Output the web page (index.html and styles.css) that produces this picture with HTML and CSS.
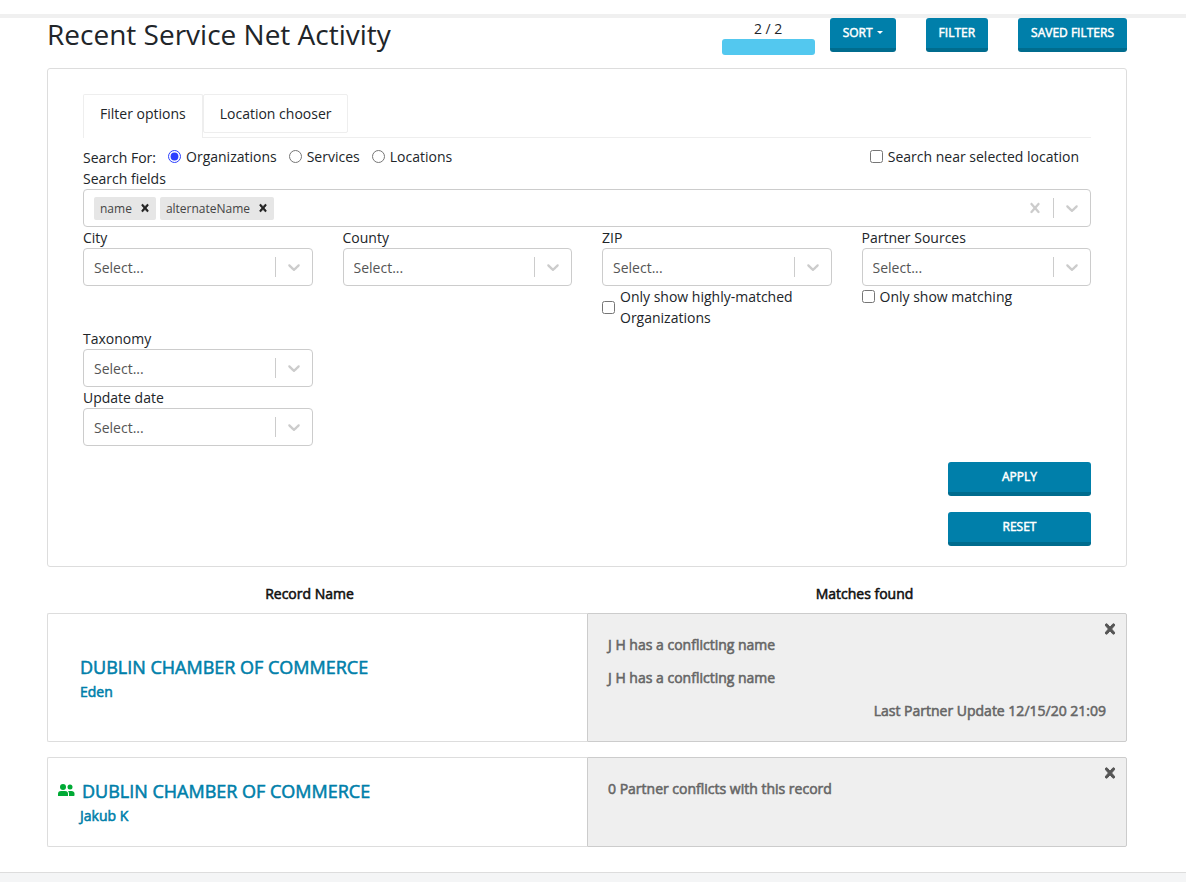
FILE: index.html
```
<!DOCTYPE html>
<html lang="en">
<head>
    <meta charset="UTF-8">
    <meta name="viewport" content="width=device-width, initial-scale=1.0">
    <title>Recent Service Net Activity</title>
    <link rel="stylesheet" href="styles.css">
</head>
<body>
    <svg class="sprite" aria-hidden="true">
        <symbol id="chevron" viewBox="0 0 20 20">
            <path d="M4.516 7.548c0.436-0.446 1.043-0.481 1.576 0l3.908 3.747 3.908-3.747c0.533-0.481 1.141-0.446 1.574 0 0.436 0.445 0.408 1.197 0 1.615-0.406 0.418-4.695 4.502-4.695 4.502-0.217 0.223-0.502 0.335-0.787 0.335s-0.57-0.112-0.789-0.335c0 0-4.287-4.084-4.695-4.502s-0.436-1.17 0-1.615z"/>
        </symbol>
        <symbol id="cross" viewBox="0 0 20 20">
            <path d="M14.348 14.849c-0.469 0.469-1.229 0.469-1.697 0l-2.651-3.030-2.651 3.029c-0.469 0.469-1.229 0.469-1.697 0-0.469-0.469-0.469-1.229 0-1.697l2.758-3.15-2.759-3.152c-0.469-0.469-0.469-1.228 0-1.697s1.228-0.469 1.697 0l2.652 3.031 2.651-3.031c0.469-0.469 1.228-0.469 1.697 0s0.469 1.229 0 1.697l-2.758 3.152 2.758 3.15c0.469 0.469 0.469 1.229 0 1.698z"/>
        </symbol>
    </svg>

    <div class="top-bar"></div>

    <main class="container">
        <header class="page-header">
            <h1>Recent Service Net Activity</h1>
            <div class="counter">
                <span>2 / 2</span>
                <div class="counter-bar"></div>
            </div>
            <div class="actions">
                <button type="button" class="btn">SORT<span class="caret"></span></button>
                <button type="button" class="btn">FILTER</button>
                <button type="button" class="btn">SAVED FILTERS</button>
            </div>
        </header>

        <section class="filter-card">
            <div class="tabs" role="tablist">
                <button type="button" class="tab active" role="tab" aria-selected="true">Filter options</button>
                <button type="button" class="tab" role="tab" aria-selected="false">Location chooser</button>
            </div>

            <form id="filterForm">
                <div class="search-for">
                    <span class="search-for-title">Search For:</span>
                    <label class="option"><input type="radio" name="searchFor" value="organizations" checked>Organizations</label>
                    <label class="option"><input type="radio" name="searchFor" value="services">Services</label>
                    <label class="option"><input type="radio" name="searchFor" value="locations">Locations</label>
                    <label class="option near"><input type="checkbox" name="near">Search near selected location</label>
                </div>

                <label class="field-label" for="searchFields">Search fields</label>
                <div class="multi-select">
                    <span class="tag">name<button type="button" class="tag-remove" aria-label="Remove name"><svg><use href="#cross"/></svg></button></span>
                    <span class="tag">alternateName<button type="button" class="tag-remove" aria-label="Remove alternateName"><svg><use href="#cross"/></svg></button></span>
                    <input type="text" id="searchFields" class="multi-input">
                    <button type="button" class="clear" aria-label="Clear"><svg class="icon"><use href="#cross"/></svg></button>
                    <span class="indicator"><svg class="icon"><use href="#chevron"/></svg></span>
                </div>

                <div class="fields">
                    <div class="field">
                        <label class="field-label" for="city">City</label>
                        <div class="select">
                            <select id="city"><option>Select...</option></select>
                            <span class="indicator"><svg class="icon"><use href="#chevron"/></svg></span>
                        </div>
                    </div>
                    <div class="field">
                        <label class="field-label" for="county">County</label>
                        <div class="select">
                            <select id="county"><option>Select...</option></select>
                            <span class="indicator"><svg class="icon"><use href="#chevron"/></svg></span>
                        </div>
                    </div>
                    <div class="field">
                        <label class="field-label" for="zip">ZIP</label>
                        <div class="select">
                            <select id="zip"><option>Select...</option></select>
                            <span class="indicator"><svg class="icon"><use href="#chevron"/></svg></span>
                        </div>
                        <label class="option"><input type="checkbox" name="highlyMatched">Only show highly-matched Organizations</label>
                    </div>
                    <div class="field">
                        <label class="field-label" for="partners">Partner Sources</label>
                        <div class="select">
                            <select id="partners"><option>Select...</option></select>
                            <span class="indicator"><svg class="icon"><use href="#chevron"/></svg></span>
                        </div>
                        <label class="option"><input type="checkbox" name="matching">Only show matching</label>
                    </div>
                    <div class="field first">
                        <label class="field-label" for="taxonomy">Taxonomy</label>
                        <div class="select">
                            <select id="taxonomy"><option>Select...</option></select>
                            <span class="indicator"><svg class="icon"><use href="#chevron"/></svg></span>
                        </div>
                    </div>
                    <div class="field first">
                        <label class="field-label" for="updateDate">Update date</label>
                        <div class="select">
                            <select id="updateDate"><option>Select...</option></select>
                            <span class="indicator"><svg class="icon"><use href="#chevron"/></svg></span>
                        </div>
                    </div>
                </div>

                <div class="form-buttons">
                    <button type="submit" class="btn">APPLY</button>
                    <button type="reset" class="btn">RESET</button>
                </div>
            </form>
        </section>

        <div class="list-header">
            <span>Record Name</span>
            <span>Matches found</span>
        </div>

        <article class="record">
            <div class="record-name">
                <div>
                    <a href="#" class="record-title">DUBLIN CHAMBER OF COMMERCE</a>
                    <a href="#" class="record-owner">Eden</a>
                </div>
            </div>
            <div class="record-matches">
                <button type="button" class="dismiss" aria-label="Dismiss"><svg class="icon"><use href="#cross"/></svg></button>
                <p>J H has a conflicting name</p>
                <p>J H has a conflicting name</p>
                <p class="updated">Last Partner Update 12/15/20 21:09</p>
            </div>
        </article>

        <article class="record">
            <div class="record-name">
                <div>
                    <a href="#" class="record-title with-icon">
                        <svg class="people" viewBox="0 0 17 12" aria-hidden="true">
                            <circle cx="5" cy="3" r="3"/>
                            <circle cx="12" cy="3" r="2.5"/>
                            <path d="M0 12V9.500C0 7.800 1.500 7 3 7h4c1.500 0 3 .8 3 2.500V12z"/>
                            <path d="M11 12V9.500c0-1-.4-1.900-1.100-2.500H13.500c1.600 0 3 .9 3 2.500V11c0 .6-.3 1-1 1z"/>
                        </svg>
                        DUBLIN CHAMBER OF COMMERCE
                    </a>
                    <a href="#" class="record-owner">Jakub K</a>
                </div>
            </div>
            <div class="record-matches">
                <button type="button" class="dismiss" aria-label="Dismiss"><svg class="icon"><use href="#cross"/></svg></button>
                <p>0 Partner conflicts with this record</p>
            </div>
        </article>
    </main>

    <footer class="footer"></footer>
</body>
</html>
```

FILE: styles.css
```
* {
    box-sizing: border-box;
}

body {
    font-family: 'Open Sans', sans-serif;
    font-size: 14px;
    line-height: 21px;
    color: #212529;
    background-color: #fff;
    display: flex;
    flex-direction: column;
    min-height: 100vh;
    margin: 0;
}

button,
input,
select {
    font: inherit;
    color: inherit;
    margin: 0;
}

button {
    border: none;
    background: none;
    padding: 0;
    cursor: pointer;
}

svg {
    display: block;
    fill: currentColor;
}

.sprite {
    display: none;
}

.icon {
    width: 20px;
    height: 20px;
}

.top-bar {
    height: 4px;
    margin-top: 14px;
    background-color: #f0f0f0;
}

.container {
    padding: 0 59px 25px 47px;
}

/* header */

.page-header {
    display: flex;
    align-items: flex-start;
    height: 50px;
}

h1 {
    font-size: 28px;
    font-weight: 400;
    line-height: 32px;
    margin: 0 auto 0 0;
}

.counter {
    width: 93px;
    margin-right: 15px;
    text-align: center;
}

.counter span {
    display: block;
}

.counter-bar {
    height: 16px;
    border-radius: 3px;
    background-color: #53c8ef;
}

.actions {
    display: flex;
    gap: 30px;
}

.btn {
    height: 34px;
    padding: 0 13px 1px;
    border-radius: 3px;
    border-bottom: 4px solid #006c8e;
    background-color: #007faa;
    color: #fff;
    font-size: 12px;
    line-height: 18px;
    -webkit-text-stroke: 0.04em;
}

.btn:hover {
    background-color: #00739a;
}

.caret {
    display: inline-block;
    margin-left: 4px;
    vertical-align: 3px;
    border: 3px solid transparent;
    border-top-color: currentColor;
    border-bottom: 0;
}

/* filters */

.filter-card {
    border: 1px solid #ddd;
    border-radius: 3px;
    padding: 25px 35px 20px;
}

.tabs {
    display: flex;
    align-items: flex-start;
    border-bottom: 1px solid #eee;
    margin-bottom: 8px;
}

.tab {
    height: 39px;
    padding: 0 16px;
    border: 1px solid #eee;
    border-radius: 2px;
}

.tab.active {
    height: 44px;
    margin-bottom: -1px;
    padding-bottom: 6px;
    border-bottom: none;
    border-radius: 2px 2px 0 0;
    background-color: #fff;
}

.search-for {
    display: flex;
    align-items: flex-start;
    gap: 12px;
}

.search-for-title {
    padding-top: 1px;
}

.option {
    display: flex;
    align-items: center;
    gap: 5px;
}

.option input {
    flex: none;
    width: 13px;
    height: 13px;
    accent-color: #2b3fff;
}

.near {
    margin: 0 12px 0 auto;
}

.field-label {
    display: block;
}

.multi-select,
.select {
    height: 38px;
    border: 1px solid #ccc;
    border-radius: 4px;
    background-color: #fff;
}

.multi-select {
    display: flex;
    align-items: center;
    gap: 4px;
    padding-left: 10px;
}

.tag {
    display: flex;
    align-items: center;
    height: 23px;
    padding-left: 6px;
    border-radius: 2px;
    background-color: #e6e6e6;
    color: #444;
    font-size: 12px;
}

.tag-remove {
    padding: 0 4px;
    margin-left: 2px;
    color: #222;
}

.tag-remove svg {
    width: 14px;
    height: 14px;
}

.tag-remove svg,
.dismiss svg {
    stroke: currentColor;
    stroke-width: 1;
}

.multi-input {
    flex: 1;
    min-width: 0;
    border: none;
    outline: none;
}

.clear {
    padding: 0 4px;
    color: #ccc;
}

.select {
    display: grid;
}

.select select {
    grid-area: 1 / 1;
    width: 100%;
    padding: 0 46px 0 10px;
    border: none;
    background: none;
    color: #555;
    appearance: none;
}

.indicator {
    grid-area: 1 / 1;
    justify-self: end;
    align-self: center;
    padding: 0 8px;
    border-left: 1px solid #ccc;
    color: #ccc;
    pointer-events: none;
}

.fields {
    display: grid;
    grid-template-columns: repeat(4, 1fr);
    column-gap: 30px;
}

.first {
    grid-column: 1;
}

.form-buttons {
    display: flex;
    flex-direction: column;
    align-items: flex-end;
    gap: 16px;
    margin-top: 16px;
}

.form-buttons .btn {
    width: 143px;
}

/* records */

.list-header {
    display: grid;
    grid-template-columns: 1fr 1fr;
    gap: 30px;
    padding: 16px 0 9px;
    text-align: center;
    color: #111;
    -webkit-text-stroke: 0.04em;
}

.record {
    display: grid;
    grid-template-columns: 1fr 1fr;
    min-height: 90px;
}

.record + .record {
    margin-top: 15px;
}

.record-name {
    display: flex;
    align-items: center;
    padding-left: 32px;
    border: 1px solid #ddd;
    border-right: none;
    border-radius: 2px 0 0 2px;
    -webkit-text-stroke: 0.04em;
}

.record-name a {
    display: block;
    color: #007faa;
    text-decoration: none;
}

.record-name .record-title {
    font-size: 18px;
    line-height: 27px;
}

.record-name .with-icon {
    display: flex;
    align-items: center;
    gap: 7px;
    margin-left: -22px;
}

.people {
    width: 17px;
    height: 12px;
    margin-bottom: 4px;
    color: #00aa35;
}

.record-matches {
    position: relative;
    padding: 20px;
    border: 1px solid #ccc;
    border-radius: 0 2px 2px 0;
    background-color: #efefef;
    color: #666;
    -webkit-text-stroke: 0.04em;
}

.record-matches p {
    margin: 0 0 12px;
}

.record-matches p:last-child {
    margin-bottom: 0;
}

.record-matches .updated {
    text-align: right;
}

.dismiss {
    position: absolute;
    top: 5px;
    right: 6px;
    color: #555;
}

.footer {
    flex: 1;
    border-top: 1px solid #ddd;
    background-color: #f4f5f6;
}
```
